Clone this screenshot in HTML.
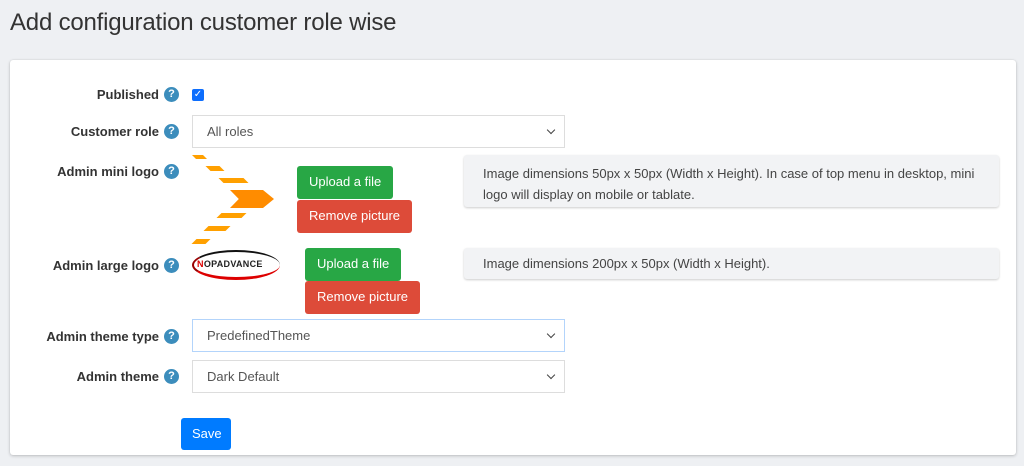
<!DOCTYPE html>
<html><head><style>
*{box-sizing:border-box;margin:0;padding:0}
body{width:1024px;height:466px;background:#eef0f3;font-family:"Liberation Sans",sans-serif;color:#212529;position:relative;overflow:hidden;font-size:13px}
.a{position:absolute}
h1{position:absolute;left:10px;top:9px;font-size:24px;font-weight:400;color:#333;letter-spacing:-.2px}
.card{left:10px;top:60px;width:1006px;height:395px;background:#fff;border-radius:3px;box-shadow:0 0 1px rgba(0,0,0,.15),0 1px 3px rgba(0,0,0,.2)}
.lbl{font-weight:700;text-align:right;width:159px;left:0;color:#333}
.q{width:15px;height:15px;border-radius:50%;background:#3c8dbc;color:#fff;font-size:11px;font-weight:700;text-align:center;line-height:15px;left:164px}
.sel{left:192px;width:373px;height:33px;border:1px solid #ddd;padding:8px 14px;color:#555}
.sel:after{content:"";position:absolute;right:10px;top:11px;width:5px;height:5px;border-right:1.5px solid #444;border-bottom:1.5px solid #444;transform:rotate(45deg)}
.btn{color:#fff;padding:8px 12px;border-radius:3px;height:33px;white-space:nowrap}
.g{background:#28a745}.r{background:#dd4b39}
.info{left:464px;width:535px;background:#f2f3f5;border-radius:3px;box-shadow:0 1px 2px rgba(0,0,0,.2);padding:8px 19px;line-height:21px;color:#444}
.st{background:#ffa000;height:5px;transform:skewX(45deg)}
.sd{transform:skewX(-45deg)}
</style></head><body>
<h1>Add configuration customer role wise</h1>
<div class="a card"></div>
<div class="a lbl" style="top:87px">Published</div><div class="a q" style="top:87px">?</div>
<div class="a" style="left:192px;top:89px;width:12px;height:12px;background:#0d6efd;border-radius:2px;color:#fff;font-size:10px;line-height:12px;text-align:center">✓</div>
<div class="a lbl" style="top:124px">Customer role</div><div class="a q" style="top:124px">?</div>
<div class="a sel" style="top:115px">All roles</div>
<div class="a lbl" style="top:164px">Admin mini logo</div><div class="a q" style="top:164px">?</div>
<div class="a st" style="left:194px;top:155px;width:11px;height:4px"></div>
<div class="a st" style="left:208px;top:166px;width:14px"></div>
<div class="a st" style="left:221px;top:178px;width:25px"></div>
<div class="a" style="left:230px;top:190px;width:44px;height:18px;background:#ff8c00;clip-path:polygon(0 0,75% 0,100% 50%,75% 100%,0 100%,20% 50%)"></div>
<div class="a st sd" style="left:219px;top:213px;width:25px"></div>
<div class="a st sd" style="left:206px;top:226px;width:22px"></div>
<div class="a st sd" style="left:194px;top:239px;width:14px"></div>
<div class="a btn g" style="left:297px;top:166px">Upload a file</div>
<div class="a btn r" style="left:297px;top:200px">Remove picture</div>
<div class="a info" style="top:155px;height:52px">Image dimensions 50px x 50px (Width x Height). In case of top menu in desktop, mini logo will display on mobile or tablate.</div>
<div class="a lbl" style="top:258px">Admin large logo</div><div class="a q" style="top:258px">?</div>
<div class="a" style="left:192px;top:250px;width:88px;height:30px;border-radius:50%;border-top:2px solid #111;border-bottom:3px solid #d00;border-left:2px solid #900"></div>
<div class="a" style="left:197px;top:259px;font-size:9px;font-weight:700;color:#222;letter-spacing:.3px"><span style="color:#d00">N</span>OPADVANCE</div>
<div class="a btn g" style="left:305px;top:248px">Upload a file</div>
<div class="a btn r" style="left:305px;top:281px">Remove picture</div>
<div class="a info" style="top:248px;height:31px;padding-top:5px">Image dimensions 200px x 50px (Width x Height).</div>
<div class="a lbl" style="top:329px">Admin theme type</div><div class="a q" style="top:329px">?</div>
<div class="a sel" style="top:319px;border-color:#b3d4fb">PredefinedTheme</div>
<div class="a lbl" style="top:369px">Admin theme</div><div class="a q" style="top:369px">?</div>
<div class="a sel" style="top:360px">Dark Default</div>
<div class="a btn" style="left:181px;top:418px;width:50px;height:32px;background:#007bff;padding:8px 11px">Save</div>
</body></html>
